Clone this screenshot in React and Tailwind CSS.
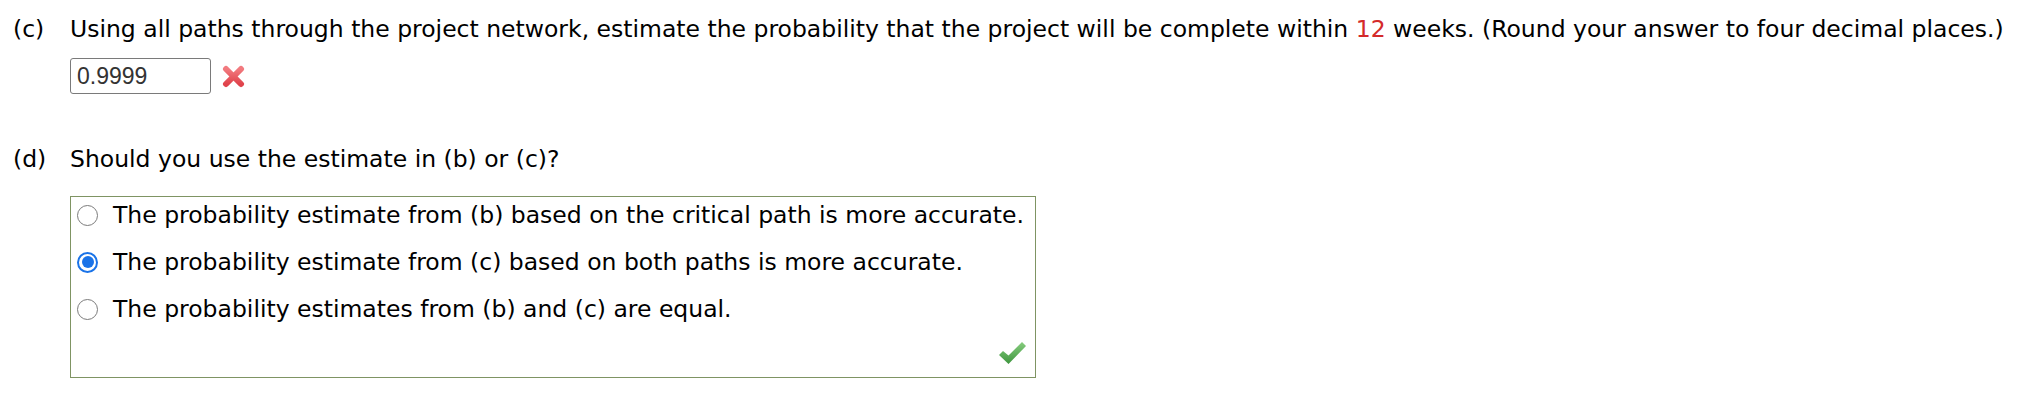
import React from 'react';

const options = [
  { id: 'b', label: 'The probability estimate from (b) based on the critical path is more accurate.', checked: false },
  { id: 'c', label: 'The probability estimate from (c) based on both paths is more accurate.', checked: true },
  { id: 'eq', label: 'The probability estimates from (b) and (c) are equal.', checked: false },
];

const WrongMark = () => (
  <svg width="23" height="23" viewBox="0 0 23 23">
    <defs>
      <linearGradient id="xg" x1="0" y1="0" x2="0" y2="1">
        <stop offset="0" stopColor="#f27a7f" />
        <stop offset="1" stopColor="#e0434b" />
      </linearGradient>
    </defs>
    <g stroke="url(#xg)" strokeWidth="6" strokeLinecap="round">
      <line x1="4" y1="4" x2="19" y2="19" />
      <line x1="19" y1="4" x2="4" y2="19" />
    </g>
  </svg>
);

const RightMark = () => (
  <svg width="27" height="23" viewBox="0 0 27 23">
    <defs>
      <linearGradient id="cg" x1="0" y1="0" x2="0" y2="1">
        <stop offset="0" stopColor="#86cc7e" />
        <stop offset="1" stopColor="#3f963f" />
      </linearGradient>
    </defs>
    <polygon points="0,13 4,9 9.5,13.5 23,0 27,4 9.5,22" fill="url(#cg)" strokeLinejoin="round" />
  </svg>
);

const Radio = ({ checked }) =>
  checked ? (
    <span className="w-[21px] h-[21px] rounded-full border-2 border-[#1a73e8] flex items-center justify-center shrink-0">
      <span className="w-[12px] h-[12px] rounded-full bg-[#1a73e8]" />
    </span>
  ) : (
    <span className="w-[21px] h-[21px] rounded-full border-[1.5px] border-[#7b7b7b] bg-white shrink-0" />
  );

export default function App() {
  return (
    <div className="w-[2028px] h-[418px] bg-white text-black font-['DejaVu_Sans',sans-serif] text-[23.5px] leading-[30px] pt-[14px]">
      {/* Part (c) */}
      <div className="flex">
        <span className="w-[70px] pl-[13px] shrink-0">(c)</span>
        <p className="whitespace-nowrap">
          Using all paths through the project network, estimate the probability that the project will be complete within{' '}
          <span className="text-[#d42a2a]">12</span> weeks. (Round your answer to four decimal places.)
        </p>
      </div>
      <div className="flex items-center gap-[11px] pl-[70px] mt-[14px]">
        <div className="w-[141px] h-[36px] border border-[#7a7a7a] rounded-[3px] flex items-center pl-[6px] font-['Liberation_Sans',sans-serif] text-[23px] text-[#333]">
          0.9999
        </div>
        <WrongMark />
      </div>

      {/* Part (d) */}
      <div className="flex mt-[50px]">
        <span className="w-[70px] pl-[13px] shrink-0">(d)</span>
        <p>Should you use the estimate in (b) or (c)?</p>
      </div>
      <div className="ml-[70px] mt-[22px] w-[966px] h-[182px] border border-[#7f9463] flex flex-col pt-[3px] pr-[9px] pb-[12px]">
        <div className="flex flex-col gap-[17px]">
          {options.map((opt) => (
            <div key={opt.id} className="flex items-center h-[30px] pl-[6px] gap-[15px]">
              <Radio checked={opt.checked} />
              <span className="whitespace-nowrap">{opt.label}</span>
            </div>
          ))}
        </div>
        <div className="mt-auto self-end">
          <RightMark />
        </div>
      </div>
    </div>
  );
}
